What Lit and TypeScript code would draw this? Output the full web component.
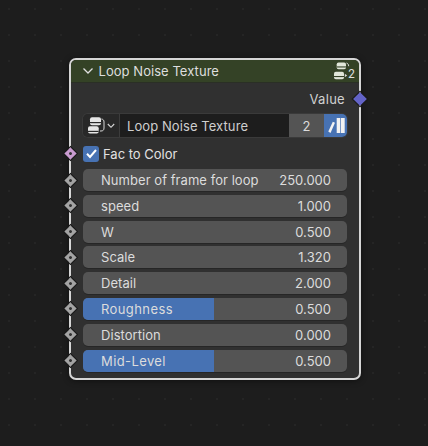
import { LitElement, html, css, svg } from "lit";
import { customElement } from "lit/decorators.js";

const rows: [string, string, number, string][] = [
  ["Number of frame for loop", "250.000", 0, ""],
  ["speed", "1.000", 0, ""],
  ["W", "0.500", 0, ""],
  ["Scale", "1.320", 0, ""],
  ["Detail", "2.000", 0, ""],
  ["Roughness", "0.500", 49.6, "wide"],
  ["Distortion", "0.000", 0, ""],
  ["Mid-Level", "0.500", 49.6, "wide"],
];

const groupIcon = svg`
  <rect x="2" y="0.200" width="11" height="8" rx="2" fill="#e6e6e6"/>
  <rect x="0" y="9.200" width="10.700" height="7.300" rx="2" fill="#e6e6e6"/>
  <rect x="2" y="5" width="11" height="1.200" fill="#2a2a2a"/>
  <rect x="0" y="13.800" width="10.700" height="1.200" fill="#2a2a2a"/>
  <path d="M13.500 2c1.800.3 2.500 1.300 2.500 3v6c0 2-1 3-3 3h-1" fill="none" stroke="#d8d8d8" stroke-width="1"/>
`;

@customElement("app-root")
export class AppRoot extends LitElement {
  static styles = css`
    :host {
      display: block;
      width: 428px;
      height: 446px;
      box-sizing: border-box;
      padding: 58px 67px 0 69px;
      background-color: #1d1d1d;
      background-image: radial-gradient(circle at 1px 1px, #252525 0.8px, transparent 1px);
      background-size: 26px 26px;
      background-position: 8px 8px;
      font-family: Inter, "Noto Sans", sans-serif;
      font-size: 13px;
      color: #d9d9d9;
      overflow: hidden;
    }
    .node {
      position: relative;
      width: 292px;
      height: 322px;
      box-sizing: border-box;
      border: 2px solid #d6d6d6;
      border-radius: 7px;
      background: #303030;
      box-shadow: 0 1px 6px rgba(0, 0, 0, 0.45);
      display: flex;
      flex-direction: column;
    }
    .header {
      height: 23px;
      flex: none;
      box-sizing: border-box;
      background: #344226;
      border-radius: 5px 5px 0 0;
      display: flex;
      align-items: center;
      padding: 0 4px 0 10.500px;
      gap: 5px;
      color: #dedede;
      border-bottom: 1px solid #2a2f25;
    }
    .chev { width: 12px; height: 8px; flex: none; }
    .title { flex: 1; letter-spacing: 0.05px; }
    .hicon { position: relative; width: 26px; height: 21px; flex: none; }
    .hicon svg { position: absolute; left: 2px; top: 0; }
    .hicon span { position: absolute; right: 0; top: 6.500px; font-size: 11.500px; color: #e0e0e0; }
    .body {
      flex: 1;
      display: flex;
      flex-direction: column;
      padding: 3px 12px 0 12px;
    }
    .out {
      height: 26px;
      flex: none;
      display: flex;
      align-items: center;
      justify-content: flex-end;
      position: relative;
      padding-right: 2px;
      letter-spacing: 0.3px;
      color: #d0d0d0;
    }
    .sel {
      margin-top: 2px;
      height: 23px;
      flex: none;
      display: flex;
      border-radius: 5px;
      box-shadow: 0 0 0 1px #3a3a3a, 0 1px 0 #242424;
      overflow: hidden;
    }
    .sel-icon {
      width: 36px;
      flex: none;
      background: #282828;
      display: flex;
      align-items: center;
      padding-left: 5px;
      box-sizing: border-box;
      gap: 2px;
    }
    .sel-name {
      flex: 1;
      background: #1d1d1d;
      border-left: 1px solid #3c3c3c;
      padding-left: 7px;
      display: flex;
      align-items: center;
      letter-spacing: 0.08px;
      color: #cfcfcf;
    }
    .sel-num {
      width: 35px;
      flex: none;
      background: #545454;
      display: flex;
      align-items: center;
      justify-content: center;
      color: #dcdcdc;
    }
    .sel-lib {
      width: 23px;
      flex: none;
      background: #4772b3;
      display: flex;
      align-items: center;
      justify-content: center;
    }
    .check {
      margin-top: 3.500px;
      height: 26px;
      flex: none;
      display: flex;
      align-items: center;
      gap: 4px;
      position: relative;
      color: #e2e2e2;
    }
    .box {
      width: 16px;
      height: 16px;
      border-radius: 3px;
      background: #4772b3;
      display: flex;
      align-items: center;
      justify-content: center;
      flex: none;
    }
    .list {
      display: flex;
      flex-direction: column;
      gap: 3.800px;
      margin-top: 2.500px;
    }
    .field {
      position: relative;
      height: 22px;
      border-radius: 5px;
      background: #545454;
      box-shadow: 0 1px 0 #262626;
      overflow: hidden;
      display: flex;
      align-items: center;
      justify-content: space-between;
      padding: 0 16px 0 18px;
      color: #dcdcdc;
      letter-spacing: 0.05px;
    }
    .field .val { letter-spacing: 0; }
    .field .wide { letter-spacing: 0.4px; }
    .fill {
      position: absolute;
      left: 0;
      top: 0;
      bottom: 0;
      background: #4772b3;
    }
    .field span { position: relative; }
    .row { position: relative; }
    .sock {
      position: absolute;
      width: 9px;
      height: 9px;
      transform: rotate(45deg);
      box-sizing: border-box;
      outline: 1px solid #1a1a1a;
    }
    .sock.gray { background: #a3a3a3; left: -17.500px; top: 6.500px; }
    .sock.gray::after, .sock.pink::after {
      content: "";
      position: absolute;
      left: 3px;
      top: 3px;
      width: 3px;
      height: 3px;
      border-radius: 50%;
      background: #303030;
    }
    .sock.pink { background: #c99bd0; left: -17.500px; top: 8.500px; }
    .sock.blue { background: #6363c7; width: 10px; height: 10px; right: -17.500px; top: 8px; }
  `;

  render() {
    return html`
      <div class="node">
        <div class="header">
          <svg class="chev" viewBox="0 0 12 8"><path d="M1.500 1.500 6 6l4.500-4.500" fill="none" stroke="#e0e0e0" stroke-width="1.300"/></svg>
          <div class="title">Loop Noise Texture</div>
          <div class="hicon">
            <svg width="20" height="20" viewBox="0 0 20 20">
              <rect x="5.700" y="1.500" width="9.300" height="6.700" rx="1.800" fill="#e0e6d8"/>
              <rect x="3" y="10.800" width="10" height="7.500" rx="1.800" fill="#e0e6d8"/>
              <rect x="5.700" y="5.400" width="9.300" height="1.100" fill="#344226"/>
              <rect x="3" y="15" width="10" height="1.100" fill="#344226"/>
              <path d="M15.500 2c1.300.3 2 1.200 2.200 3.200" fill="none" stroke="#d8d8d8" stroke-width="1"/>
              <path d="M13.800 12.800l2.400 1.700-2.400 1.700z" fill="#d8d8d8"/>
            </svg>
            <span>2</span>
          </div>
        </div>
        <div class="body">
          <div class="out">Value<i class="sock blue"></i></div>
          <div class="sel">
            <div class="sel-icon">
              <svg width="17" height="17" viewBox="0 0 17 17">${groupIcon}</svg>
              <svg width="8" height="6" viewBox="0 0 8 6"><path d="M.8 1 4 4.300 7.200 1" fill="none" stroke="#d8d8d8" stroke-width="1.100"/></svg>
            </div>
            <div class="sel-name">Loop Noise Texture</div>
            <div class="sel-num">2</div>
            <div class="sel-lib">
              <svg width="19" height="19" viewBox="0 0 19 19" fill="#f2f2f2">
                <path d="M2.300 15.500 6.800 5.700 9 6.700 4.500 17z"/>
                <rect x="10.700" y="2" width="3.300" height="15"/>
                <rect x="14.700" y="2" width="4" height="15"/>
              </svg>
            </div>
          </div>
          <div class="check">
            <i class="sock pink"></i>
            <div class="box">
              <svg width="13" height="13" viewBox="0 0 13 13"><path d="M2 6.800 5 10l6-7" fill="none" stroke="#fff" stroke-width="2"/></svg>
            </div>
            <span>Fac to Color</span>
          </div>
          <div class="list">
            ${rows.map(
              ([label, val, pct, cls]) => html`
                <div class="row">
                  <i class="sock gray"></i>
                  <div class="field">
                    ${pct ? html`<div class="fill" style="width:${pct}%"></div>` : ""}
                    <span class=${cls}>${label}</span><span class="val">${val}</span>
                  </div>
                </div>
              `
            )}
          </div>
        </div>
      </div>
    `;
  }
}
